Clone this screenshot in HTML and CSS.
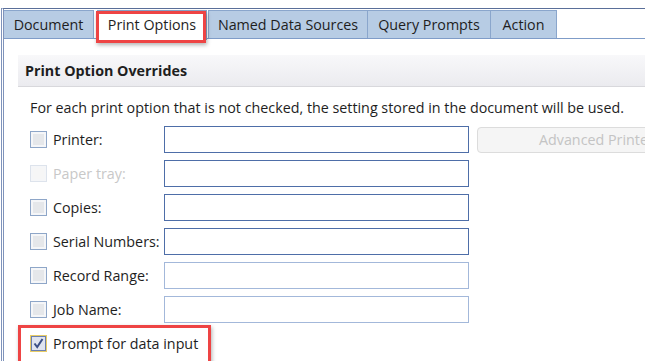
FILE: index.html
```html
<!DOCTYPE html>
<html lang="en">
<head>
    <meta charset="UTF-8">
    <title>Print Options</title>
    <link rel="stylesheet" href="styles.css">
</head>
<body>
    <div class="frame">
        <div class="tabs">
            <div class="tab tab-doc">Document</div>
            <div class="tab tab-print active">Print Options</div>
            <div class="tab tab-nds">Named Data Sources</div>
            <div class="tab tab-qp">Query Prompts</div>
            <div class="tab tab-act">Action</div>
        </div>

        <div class="panel">
            <div class="section-title">Print Option Overrides</div>
            <p class="hint">For each print option that is not checked, the setting stored in the document will be used.</p>

            <div class="rows">
                <div class="row">
                    <label class="check"><span class="box"></span>Printer:</label>
                    <div class="field dark"></div>
                    <button class="adv" disabled>Advanced Printer Options</button>
                </div>
                <div class="row">
                    <label class="check disabled"><span class="box"></span>Paper tray:</label>
                    <div class="field dark"></div>
                </div>
                <div class="row">
                    <label class="check"><span class="box"></span>Copies:</label>
                    <div class="field dark"></div>
                </div>
                <div class="row">
                    <label class="check"><span class="box"></span>Serial Numbers:</label>
                    <div class="field dark"></div>
                </div>
                <div class="row">
                    <label class="check"><span class="box"></span>Record Range:</label>
                    <div class="field"></div>
                </div>
                <div class="row">
                    <label class="check"><span class="box"></span>Job Name:</label>
                    <div class="field"></div>
                </div>
                <div class="row prompt">
                    <label class="check wide"><span class="box checked">
                        <svg width="13" height="13" viewBox="0 0 13 13"><path d="M2.5 6.5 L5.2 10 L10.5 2" fill="none" stroke="#3b4f86" stroke-width="2"/></svg>
                    </span>Prompt for data input</label>
                </div>
            </div>
        </div>
    </div>

    <!-- callout boxes -->
    <div class="callout callout-tab"></div>
    <div class="callout callout-prompt"></div>
</body>
</html>
```

FILE: styles.css
```css
* {
    box-sizing: border-box;
}
body {
    margin: 0;
    width: 645px;
    height: 361px;
    overflow: hidden;
    background: #fff;
    font-family: "Open Sans", "Noto Sans", sans-serif;
    font-size: 14.3px;
    color: #1e1e1e;
    position: relative;
}
.frame {
    margin: 8px 0 0 1px;
    border-top: 1px solid #5a6f99;
    border-left: 3px double #7f93bb;
    height: 400px;
}
.tabs {
    display: flex;
    height: 30px;
    padding-top: 1px;
    border-bottom: 1px solid #7f9cc8;
}
.tab {
    flex: none;
    background: #b7cce4;
    border: 1px solid #8aa6cc;
    border-bottom: none;
    text-align: center;
    line-height: 27px;
    white-space: nowrap;
}
.tab-doc {
    border-left: none;
    width: 90px;
}
.tab-print {
    margin-left: 3px;
    width: 110px;
}
.tab-nds {
    margin-left: 1px;
    width: 160px;
}
.tab-qp {
    margin-left: -1px;
    width: 124px;
}
.tab-act {
    margin-left: -1px;
    width: 67px;
}
.tab.active {
    background: #fff;
    height: 30px;
    margin-bottom: -1px;
}
.panel {
    padding: 16px 0 0 14px;
}
.section-title {
    height: 32px;
    line-height: 31px;
    padding-left: 7px;
    font-weight: bold;
    background: linear-gradient(#f8f8fa, #ebebef);
    border-bottom: 1px solid #d8d8dc;
}
.hint {
    margin: 11px 0 0 12px;
    line-height: 20px;
    white-space: nowrap;
}
.rows {
    margin-top: 8px;
}
.row {
    display: flex;
    align-items: center;
    height: 27px;
    margin-bottom: 7px;
}
.check {
    flex: none;
    display: flex;
    align-items: center;
    width: 146px;
    padding-left: 12px;
    white-space: nowrap;
}
.check.wide {
    width: auto;
}
.check.disabled {
    color: #c8c8c8;
}
.box {
    flex: none;
    width: 17px;
    height: 17px;
    border: 1px solid #8ea6c8;
    background: #e5e7ea;
    box-shadow: inset 0 0 0 2px #f5f6f8;
    margin-right: 6px;
    display: flex;
    align-items: center;
    justify-content: center;
}
.check.disabled .box {
    border-color: #dde3ec;
    background: #f6f6f6;
}
.box.checked {
    border-color: #e8cc66;
    background: #dfe4f0;
    box-shadow: inset 0 0 0 1px #6a7fb0;
}
.field {
    flex: none;
    width: 305px;
    height: 27px;
    border: 1px solid #a3b8da;
    background: #fff;
}
.field.dark {
    border-color: #4e6ea8;
}
.adv {
    flex: none;
    margin-left: 8px;
    width: 200px;
    height: 26px;
    border: 1px solid #dcdcdc;
    border-radius: 4px;
    background: #f5f5f5;
    color: #c4c4c4;
    font: inherit;
    text-align: left;
    padding-left: 61px;
    white-space: nowrap;
    overflow: hidden;
}
.row.prompt {
    margin-top: 3px;
}
.callout {
    position: absolute;
    border: 3px solid #ee4444;
    box-shadow: 1px 2px 4px rgba(0, 0, 0, 0.3);
}
.callout-tab {
    left: 96px;
    top: 11px;
    width: 110px;
    height: 32px;
}
.callout-prompt {
    left: 18px;
    top: 325px;
    width: 193px;
    height: 40px;
}
```
